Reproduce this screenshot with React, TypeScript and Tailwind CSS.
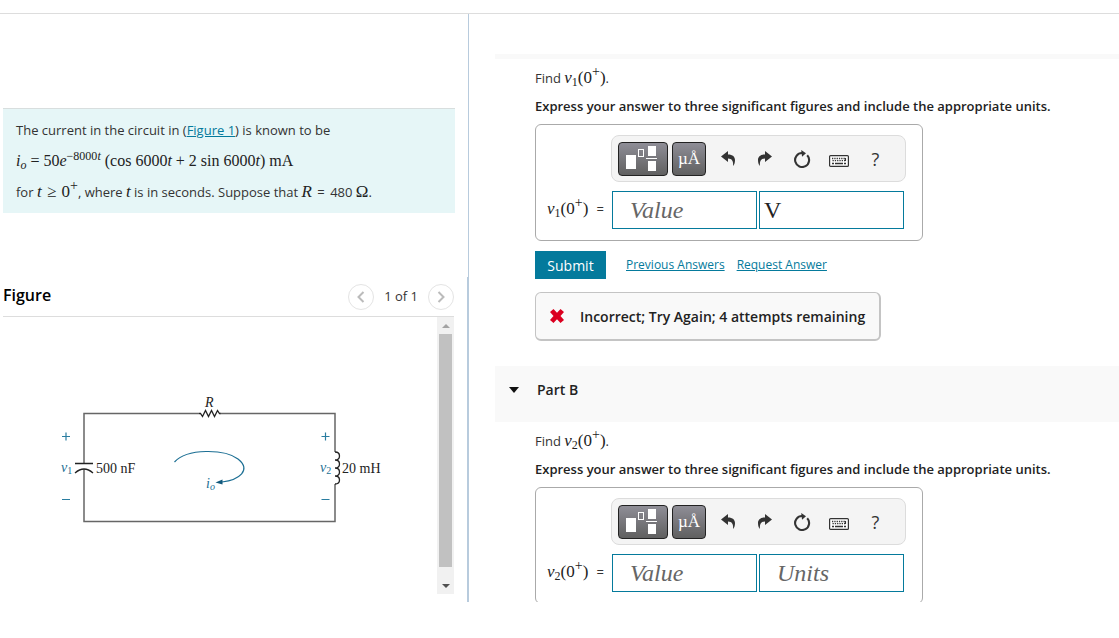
import type { ReactNode } from 'react'

interface PartProps {
  id: string
  index: number
  units?: string
}

function MathText({ children, size = 'text-[17px]' }: { children: ReactNode; size?: string }) {
  return <span className={`font-['Liberation_Serif',serif] leading-none text-[#222] ${size}`}>{children}</span>
}

function Voltage({ index }: { index: number }) {
  return (
    <MathText>
      <i>v</i>
      <sub className="text-xs">{index}</sub>(0<sup className="text-sm">+</sup>)
    </MathText>
  )
}

function CurvedArrow({ flip }: { flip?: boolean }) {
  return (
    <svg viewBox="0 0 14 15" className={`h-[15px] w-3.5 ${flip ? '-scale-x-100' : ''}`} aria-hidden="true">
      <path d="M0 5.5 7 0v3.4c4.800 0 7 2.400 7 5.800 0 2.600-.8 4.500-1.900 5.800C12.500 10 11 7.600 7 7.500V11z" fill="#333" />
    </svg>
  )
}

function ResetIcon() {
  return (
    <svg viewBox="0 0 18 18" className="size-[18px]" aria-hidden="true">
      <path d="M14.200 5.200A7 7 0 1 1 9 3" fill="none" stroke="#333" strokeWidth="2.100" />
      <path d="M8.200 0 13 3.200 9 6.700z" fill="#333" />
    </svg>
  )
}

function KeyboardIcon() {
  return (
    <svg viewBox="0 0 20 12" className="h-3 w-5" aria-hidden="true">
      <rect x=".6" y=".6" width="18.800" height="10.800" rx="1" fill="#fff" stroke="#333" strokeWidth="1.200" />
      <path d="M3 3.500h14M3.500 5.700h13.500" stroke="#333" strokeWidth="1.300" strokeDasharray="1.300 1" />
      <path d="M3 8.500h2m1 0h8m1 0h2M16.400 3v3" stroke="#333" strokeWidth="1.300" />
    </svg>
  )
}

function TemplateIcon() {
  return (
    <svg viewBox="0 0 48 32" className="h-8 w-12" aria-hidden="true" fill="#fff">
      <rect x="7" y="12" width="10" height="14" />
      <rect x="19.500" y="6.500" width="5" height="7" fill="none" stroke="#fff" />
      <rect x="29" y="3" width="8" height="10" />
      <rect x="27" y="15" width="11" height="1" />
      <rect x="29" y="18" width="8" height="10" />
    </svg>
  )
}

const darkButton =
  'flex h-[34px] items-center justify-center rounded border border-[#222] bg-linear-to-b from-[#8f8e97] to-[#606060] text-white'
const toolButton = 'flex w-[37px] items-center justify-center'

function Toolbar() {
  return (
    <div className="flex h-[47px] items-center rounded-lg border border-[#dcdcdc] bg-[#f4f4f4] pl-1.5">
      <button type="button" aria-label="Templates" className={`${darkButton} mr-1 w-[50px]`}>
        <TemplateIcon />
      </button>
      <button type="button" className={`${darkButton} mr-[3px] w-[34px] font-['Liberation_Serif',serif] text-[17px]`}>
        µÅ
      </button>
      <button type="button" aria-label="Undo" className={toolButton}>
        <CurvedArrow />
      </button>
      <button type="button" aria-label="Redo" className={toolButton}>
        <CurvedArrow flip />
      </button>
      <button type="button" aria-label="Reset" className={toolButton}>
        <ResetIcon />
      </button>
      <button type="button" aria-label="Keyboard shortcuts" className={`${toolButton} pt-1`}>
        <KeyboardIcon />
      </button>
      <button type="button" aria-label="Help" className={`${toolButton} text-lg text-[#333]`}>
        ?
      </button>
    </div>
  )
}

const field =
  "h-[38px] w-[145px] border border-[#047a9c] bg-white font-['Liberation_Serif',serif] text-2xl text-[#222] outline-none placeholder:italic placeholder:text-[#666] placeholder:opacity-100"

function Part({ id, index, units }: PartProps) {
  return (
    <div className="px-10 pt-2">
      <p className="flex h-6 items-center">
        <span>
          Find <Voltage index={index} />.
        </span>
      </p>
      <p className="mt-[5px] text-[13px] leading-5 font-semibold whitespace-nowrap text-[#222]">
        Express your answer to three significant figures and include the appropriate units.
      </p>
      <div className="mt-2 w-fit rounded-md border border-[#aaa] pt-2.5 pr-4 pb-[11px] pl-[11px]">
        <div className="ml-16">
          <Toolbar />
        </div>
        <div className="mt-[9px] mr-0.5 flex items-center">
          <label htmlFor={`${id}-value`} className="flex w-[65px] items-baseline justify-between pr-2 whitespace-nowrap">
            <span>
              <Voltage index={index} />
            </span>
            <span>=</span>
          </label>
          <input id={`${id}-value`} type="text" placeholder="Value" className={`${field} mr-0.5 pl-[17px]`} />
          <input
            type="text"
            aria-label="Units"
            placeholder="Units"
            defaultValue={units}
            className={`${field} ${units ? 'pl-1' : 'pl-[17px]'}`}
          />
        </div>
      </div>
    </div>
  )
}

function Circuit() {
  return (
    <svg viewBox="0 0 340 145" className="mt-[68px] ml-[47px] h-[145px] w-[340px] font-['Liberation_Serif',serif] text-sm" role="img" aria-label="Circuit">
      <g fill="none" stroke="#666" strokeWidth="1.500">
        <path d="M149 28.500H34V78.500M170 28.500H285V67" />
        <path d="M34 84V136.500H285V99" />
      </g>
      <g fill="none" stroke="#222" strokeWidth="1.300">
        <path d="m149 28.500 1.500 0 2 3 3-6 3 6 3-6 3 6 3-6 2 3h1" />
        <path d="M25 78.500h18M25 88q9-8 18 0" />
        <path d="M285 67c6 0 6 8 0 8 6 0 6 8 0 8 6 0 6 8 0 8 6 0 6 8 0 8" />
      </g>
      <path d="M124.500 77C137 63 175 64 188 74c14 11 1 21-16 23" fill="none" stroke="#1c6f94" strokeWidth="1.200" />
      <path d="m165.500 97.500 7-3v5z" fill="#12597c" />
      <path d="M12 51.500h8M16 47.500v8M12 114.500h8M271.500 51.500h8M275.500 47.500v8M271.500 114.500h8" stroke="#2a7da0" strokeWidth="1.200" />
      <g fill="#222">
        <text x="155" y="22" fontStyle="italic">R</text>
        <text x="46" y="88">500 nF</text>
        <text x="292" y="88">20 mH</text>
      </g>
      <g fill="#1c6f94">
        <text x="11" y="87"><tspan fontStyle="italic">v</tspan><tspan dy="2" fontSize="10">1</tspan></text>
        <text x="270" y="87"><tspan fontStyle="italic">v</tspan><tspan dy="2" fontSize="10">2</tspan></text>
        <text x="156" y="103" fontStyle="italic">i<tspan dy="2" fontSize="10">o</tspan></text>
      </g>
    </svg>
  )
}

const pager = 'flex size-[26px] items-center justify-center rounded-full border border-[#e4e4e4]'

function FigurePanel() {
  return (
    <section className="flex min-h-0 flex-1 flex-col border-r-2 border-[#b8cbdd] pr-[13px] pb-2">
      <header className="flex h-10 items-center justify-between border-b border-[#ddd]">
        <h2 className="pb-1 text-base font-semibold text-black">Figure</h2>
        <div className="flex items-center gap-2.5">
          <button type="button" aria-label="Previous figure" className={pager}>
            <svg viewBox="0 0 8 12" className="h-3 w-2"><path d="M6.500 1 1.500 6l5 5" fill="none" stroke="#bbb" strokeWidth="2" /></svg>
          </button>
          <span>1 of 1</span>
          <button type="button" aria-label="Next figure" className={pager}>
            <svg viewBox="0 0 8 12" className="h-3 w-2"><path d="m1.500 1 5 5-5 5" fill="none" stroke="#bbb" strokeWidth="2" /></svg>
          </button>
        </div>
      </header>
      <div className="flex min-h-0 flex-1">
        <div className="min-w-0 flex-1 overflow-hidden">
          <Circuit />
        </div>
        <div className="flex w-[17px] flex-col items-center bg-[#f1f1f1]">
          <button type="button" aria-label="Scroll up" className="flex h-[17px] w-full items-center justify-center">
            <svg viewBox="0 0 8 4" className="h-1 w-2"><path d="M0 4 4 0l4 4z" fill="#a3a3a3" /></svg>
          </button>
          <div className="mb-2.5 w-[13px] flex-1 bg-[#c1c1c1]" />
          <button type="button" aria-label="Scroll down" className="flex h-[17px] w-full items-center justify-center">
            <svg viewBox="0 0 8 4" className="h-1 w-2"><path d="m0 0 4 4 4-4z" fill="#505050" /></svg>
          </button>
        </div>
      </div>
    </section>
  )
}

function Problem() {
  return (
    <div className="mr-[13px] border-t border-[#d8dede] bg-[#e6f6f7] px-[13px] pt-[9px] pb-[9px]">
      <p className="h-6 leading-6">
        The current in the circuit in (<a href="#figure" className="text-[#047a9c] underline">Figure 1</a>) is known to be
      </p>
      <p className="mt-[7px] h-6 leading-6 whitespace-nowrap">
        <MathText size="text-base">
          <i>i<sub className="text-xs">o</sub></i> = 50<i>e</i>
          <sup className="text-xs">−8000<i>t</i></sup> (cos 6000<i>t</i> + 2 sin 6000<i>t</i>) mA
        </MathText>
      </p>
      <p className="mt-[7px] h-6 leading-6">
        for{' '}
        <MathText>
          <i>t</i> <span className="mx-px">≥</span> 0<sup className="text-sm">+</sup>
        </MathText>
        , where <MathText><i>t</i></MathText> is in seconds. Suppose that <MathText><i>R</i></MathText>{' '}
        <span className="mx-0.5">=</span> 480 <MathText>Ω</MathText>.
      </p>
    </div>
  )
}

export default function App() {
  return (
    <div className="flex h-screen flex-col bg-white pb-9 font-['Open_Sans',sans-serif] text-[13px] text-[#333]">
      <div className="h-3.5 shrink-0 border-b border-[#ddd]" />
      <main className="grid min-h-0 flex-1 grid-cols-[469fr_650fr]">
        <div className="flex min-h-0 flex-col pl-[3px]">
          <div className="border-r border-[#b8cbdd] pt-[94px] pb-16">
            <Problem />
          </div>
          <FigurePanel />
        </div>
        <div className="min-h-0 overflow-hidden pt-10 pl-[26px]">
          <div className="h-[5px] bg-[#f9f9f9]" />
          <Part id="part-a" index={1} units="V" />
          <div className="mt-2.5 ml-10 flex items-center">
            <button type="button" className="h-7 w-[71px] bg-[#047a9c] pt-0.5 text-sm text-white">
              Submit
            </button>
            <a href="#previous" className="ml-5 text-xs font-medium text-[#047a9c] underline">Previous Answers</a>
            <a href="#request" className="ml-3 text-xs font-medium text-[#047a9c] underline">Request Answer</a>
          </div>
          <div className="mt-[13px] ml-10 flex h-[49px] w-fit items-center rounded-md border border-r-2 border-b-2 border-[#c4c4c4] bg-[#f9f9f9] px-3.5">
            <svg viewBox="0 0 14 14" className="mr-4 size-3.5" aria-hidden="true">
              <path d="m3.500 0 3.500 3.700L10.500 0 14 3 10.500 7l3.500 4-3.500 3L7 10.300 3.500 14 0 11l3.500-4L0 3z" fill="#db0020" />
            </svg>
            <p className="pt-0.5 text-sm font-semibold text-[#222]">Incorrect; Try Again; 4 attempts remaining</p>
          </div>
          <div className="mt-[25px] flex h-14 items-start bg-[#f9f9f9] pt-3.5 pl-3.5">
            <button type="button" aria-expanded="true" className="flex items-center gap-[18px] text-sm font-semibold text-[#222]">
              <svg viewBox="0 0 10 6" className="h-1.5 w-2.5" aria-hidden="true"><path d="M0 0h10L5 6z" fill="#111" /></svg>
              Part B
            </button>
          </div>
          <Part id="part-b" index={2} />
        </div>
      </main>
    </div>
  )
}
